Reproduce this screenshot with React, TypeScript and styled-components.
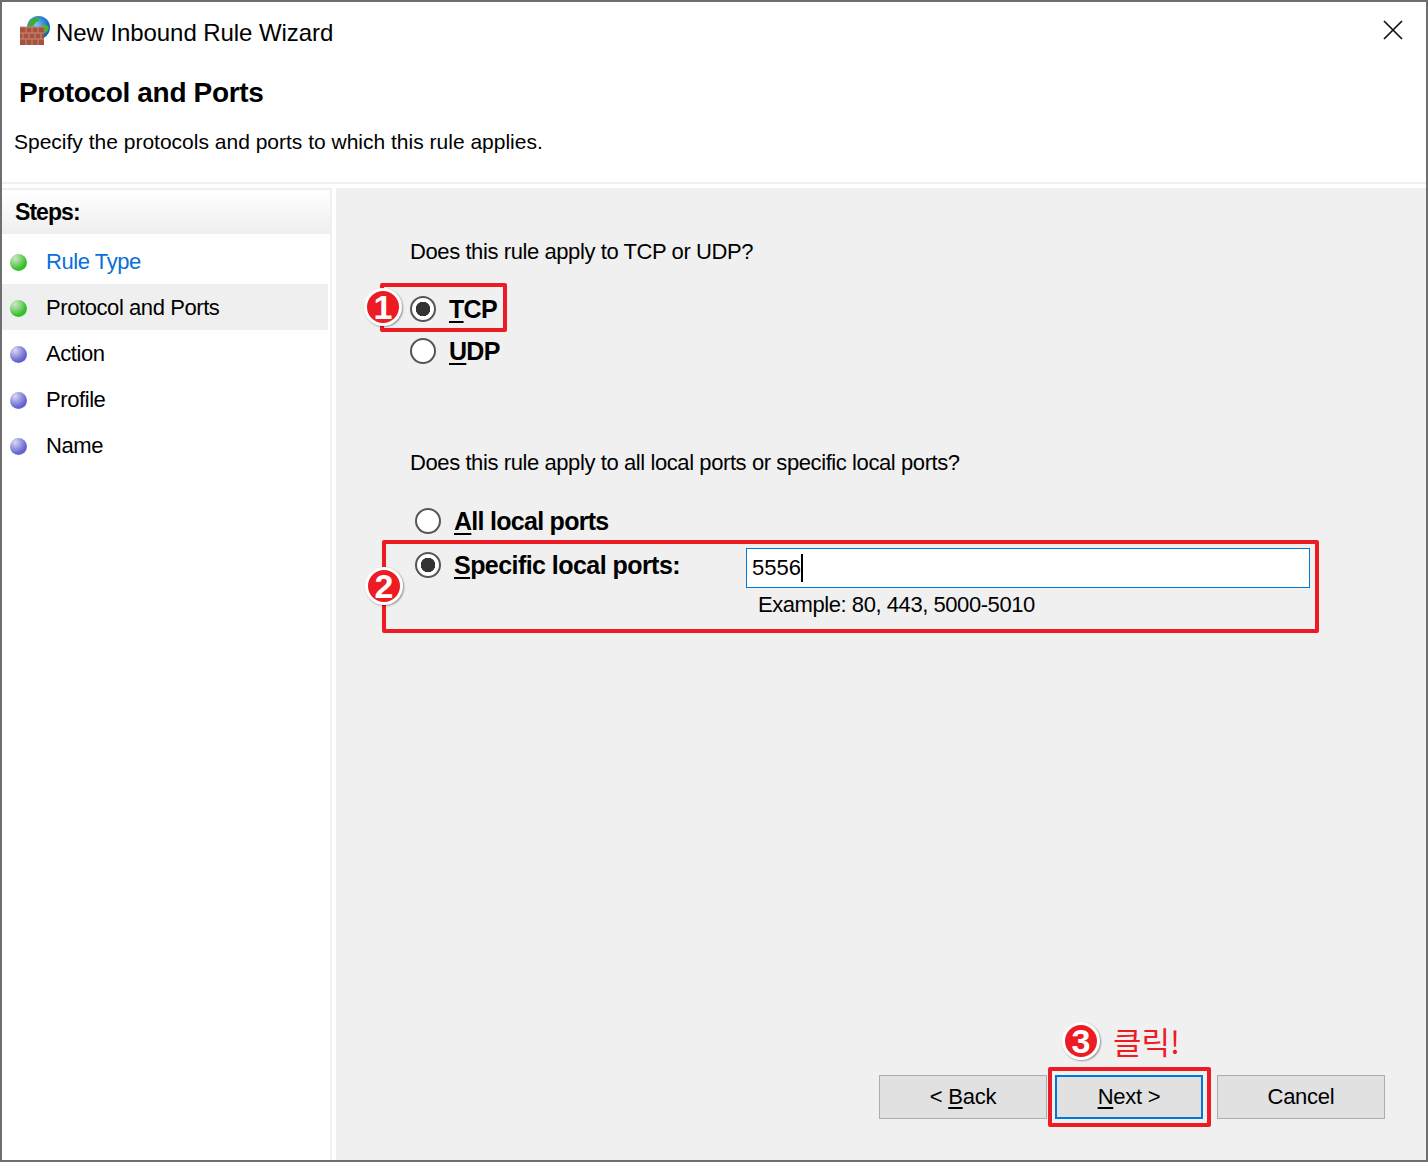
import React from "react";
import styled, { createGlobalStyle } from "styled-components";

const Global = createGlobalStyle`
  html, body { margin: 0; padding: 0; background: #fff; }
  body { font-family: "Liberation Sans", Arial, sans-serif; color: #000; }
  * { box-sizing: border-box; }
`;

const Window = styled.div`
  position: relative;
  width: 1428px;
  height: 1162px;
  display: flex;
  flex-direction: column;
  background: #fff;
  border: 2px solid #6e6e6e;
  overflow: hidden;
`;
const TitleBar = styled.div`
  height: 60px;
  display: flex;
  align-items: center;
  padding: 0 23px 0 17px;
`;
const AppTitle = styled.div`
  margin-left: 3px;
  flex: 1;
  font-size: 24px;
  letter-spacing: -0.07px;
  padding-top: 2px;
`;
const CloseButton = styled.button`
  width: 20px;
  height: 20px;
  padding: 0;
  margin-top: -4px;
  border: 0;
  background: none;
  display: flex;
`;
const Header = styled.header`
  height: 122px;
  border-bottom: 2px solid #f0f0f0;
  padding-left: 12px;
`;
const HeaderTitle = styled.h1`
  margin: 14px 0 0 5px;
  height: 34px;
  line-height: 34px;
  font-size: 28px;
  font-weight: 700;
  letter-spacing: -0.33px;
`;
const HeaderText = styled.p`
  margin: 17px 0 0;
  line-height: 30px;
  font-size: 21px;
  letter-spacing: 0;
`;
const Body = styled.div`
  flex: 1;
  min-height: 0;
  margin-top: 4px;
  display: flex;
`;
const Sidebar = styled.nav`
  width: 330px;
  border: 2px solid #f0f0f0;
  border-width: 2px 2px 0 0;
  display: flex;
  flex-direction: column;
`;
const StepsHead = styled.div`
  height: 44px;
  line-height: 44px;
  padding-left: 13px;
  font-size: 23px;
  font-weight: 700;
  letter-spacing: -0.95px;
  background: linear-gradient(#ffffff, #eeeeee);
`;
const StepList = styled.ul`
  list-style: none;
  margin: 4px 0 0;
  padding: 0;
`;
const Step = styled.li<{ $active?: boolean; $link?: boolean }>`
  width: 326px;
  height: 46px;
  display: flex;
  align-items: center;
  padding: 2px 0 0 8px;
  gap: 19px;
  font-size: 22px;
  letter-spacing: -0.42px;
  background: ${(p) => (p.$active ? "#efefef" : "transparent")};
  color: ${(p) => (p.$link ? "#0a6fd8" : "#000")};
`;
const Bullet = styled.span<{ $done?: boolean }>`
  flex: none;
  width: 17px;
  height: 17px;
  border-radius: 50%;
  background: ${(p) =>
    p.$done
      ? "radial-gradient(circle at 30% 25%, #c9e8c4 0, #8fd585 30%, #35bf2c 65%)"
      : "radial-gradient(circle at 30% 25%, #d9d9f2 0, #a2a2e2 30%, #6464d0 65%)"};
`;
const Main = styled.main`
  flex: 1;
  margin-left: 4px;
  padding: 0 0 0 74px;
  background: #f0f0f0;
  display: flex;
  flex-direction: column;
`;
const Question = styled.div<{ $top: number }>`
  margin-top: ${(p) => p.$top}px;
  height: 30px;
  line-height: 30px;
  font-size: 22px;
  letter-spacing: -0.41px;
`;
const RadioRow = styled.label<{ $top: number; $indent?: number }>`
  margin: ${(p) => p.$top}px 0 0 ${(p) => p.$indent ?? 0}px;
  height: 30px;
  display: flex;
  align-items: center;
  gap: 13px;
  font-size: 25px;
  font-weight: 700;
  letter-spacing: -0.72px;
`;
const RadioCircle = styled.span<{ $on?: boolean }>`
  flex: none;
  width: 26px;
  height: 26px;
  border-radius: 50%;
  border: 2.5px solid #555;
  background: ${(p) =>
    p.$on
      ? "radial-gradient(circle, #333 0 7px, #fff 7.5px)"
      : "#fff"};
`;
const Key = styled.span`
  text-decoration: underline;
  text-underline-offset: 3px;
  text-decoration-thickness: 2px;
`;
const PortsRow = styled.div`
  margin-top: 12px;
  display: flex;
  align-items: flex-start;
`;
const PortsLabel = styled(RadioRow)`
  width: 331px;
  flex: none;
  letter-spacing: -0.55px;
`;
const PortsField = styled.div`
  width: 564px;
`;
const PortsInput = styled.div`
  height: 40px;
  border: 1.5px solid #0078d7;
  background: #fff;
  display: flex;
  align-items: center;
  padding-left: 5px;
  font-size: 22px;
  letter-spacing: 0;
`;
const Caret = styled.span`
  width: 2px;
  height: 28px;
  background: #000;
`;
const Example = styled.div`
  margin: 2px 0 0 12px;
  height: 30px;
  line-height: 30px;
  font-size: 22px;
  letter-spacing: -0.44px;
`;
const Footer = styled.div`
  margin-top: auto;
  height: 85px;
  padding-right: 41px;
  display: flex;
  justify-content: flex-end;
`;
const WizardButton = styled.button<{ $w: number; $gap?: number; $focus?: boolean }>`
  width: ${(p) => p.$w}px;
  height: 44px;
  margin-left: ${(p) => p.$gap ?? 0}px;
  padding: 0;
  background: #e1e1e1;
  border: ${(p) => (p.$focus ? "2px solid #0078d7" : "1.5px solid #adadad")};
  font: 22px "Liberation Sans", Arial, sans-serif;
  letter-spacing: -0.25px;
  color: #000;
`;
const RedFrame = styled.div<{ $x: number; $y: number; $w: number; $h: number }>`
  position: absolute;
  left: ${(p) => p.$x - 2}px;
  top: ${(p) => p.$y - 2}px;
  width: ${(p) => p.$w}px;
  height: ${(p) => p.$h}px;
  border: 4px solid #ed1c24;
  border-radius: 2px;
  pointer-events: none;
`;
const Badge = styled.div<{ $x: number; $y: number }>`
  position: absolute;
  left: ${(p) => p.$x - 21}px;
  top: ${(p) => p.$y - 21}px;
  width: 38px;
  height: 38px;
  border-radius: 50%;
  background: #ed1c24;
  border: 3px solid #fff;
  box-shadow: 1px 1px 2px rgba(0, 0, 0, 0.4);
  color: #fff;
  font-size: 34px;
  font-weight: 700;
  line-height: 32px;
  text-align: center;
`;
const ClickNote = styled.div`
  position: absolute;
  left: 1111px;
  top: 1019px;
  color: #ed1c24;
  font-family: "Noto Sans CJK KR", sans-serif;
  font-size: 31px;
  line-height: 40px;
`;

const FirewallIcon = () => (
  <svg width="34" height="32" viewBox="0 0 34 32">
    <defs>
      <radialGradient id="globe" cx="0.4" cy="0.4" r="0.7">
        <stop offset="0" stopColor="#7fc8f5" />
        <stop offset="0.7" stopColor="#1e73c8" />
        <stop offset="1" stopColor="#1a4f9a" />
      </radialGradient>
    </defs>
    <circle cx="19.5" cy="11.5" r="11.5" fill="url(#globe)" />
    <path d="M10 7c3-5 7-6 10-5 1 2-1 4-3 4-1 2-3 3-4 6l-4-1z" fill="#3fae2e" />
    <path d="M23 9c3-1 6 0 7 3-1 3-3 5-5 5-2-2-3-5-2-8z" fill="#4cb535" />
    <rect x="1" y="11" width="24" height="18" fill="#a5533f" />
    <g stroke="#c98a74" strokeWidth="1" fill="none">
      <path d="M1 11h24M1 17h24M1 23h24" />
      <path d="M7 11v6M13 11v6M19 11v6M4 17v6M10 17v6M16 17v6M22 17v6M7 23v6M13 23v6M19 23v6" />
    </g>
  </svg>
);

const CloseIcon = () => (
  <svg width="20" height="20" viewBox="0 0 20 20">
    <path d="M1 1l18 18M19 1L1 19" stroke="#111" strokeWidth="1.7" fill="none" />
  </svg>
);

export default function App() {
  return (
    <>
      <Global />
      <Window>
        <TitleBar>
          <FirewallIcon />
          <AppTitle>New Inbound Rule Wizard</AppTitle>
          <CloseButton aria-label="Close">
            <CloseIcon />
          </CloseButton>
        </TitleBar>
        <Header>
          <HeaderTitle>Protocol and Ports</HeaderTitle>
          <HeaderText>Specify the protocols and ports to which this rule applies.</HeaderText>
        </Header>
        <Body>
          <Sidebar>
            <StepsHead>Steps:</StepsHead>
            <StepList>
              <Step $link>
                <Bullet $done />
                Rule Type
              </Step>
              <Step $active>
                <Bullet $done />
                Protocol and Ports
              </Step>
              <Step>
                <Bullet />
                Action
              </Step>
              <Step>
                <Bullet />
                Profile
              </Step>
              <Step>
                <Bullet />
                Name
              </Step>
            </StepList>
          </Sidebar>
          <Main>
            <Question $top={49}>Does this rule apply to TCP or UDP?</Question>
            <RadioRow $top={27}>
              <RadioCircle $on />
              <span>
                <Key>T</Key>CP
              </span>
            </RadioRow>
            <RadioRow $top={12}>
              <RadioCircle />
              <span>
                <Key>U</Key>DP
              </span>
            </RadioRow>
            <Question $top={82}>Does this rule apply to all local ports or specific local ports?</Question>
            <RadioRow $top={28} $indent={5}>
              <RadioCircle />
              <span>
                <Key>A</Key>ll local ports
              </span>
            </RadioRow>
            <PortsRow>
              <PortsLabel $top={2} $indent={5}>
                <RadioCircle $on />
                <span>
                  <Key>S</Key>pecific local ports:
                </span>
              </PortsLabel>
              <PortsField>
                <PortsInput>
                  5556
                  <Caret />
                </PortsInput>
                <Example>Example: 80, 443, 5000-5010</Example>
              </PortsField>
            </PortsRow>
            <Footer>
              <WizardButton $w={168}>
                &lt; <Key>B</Key>ack
              </WizardButton>
              <WizardButton $w={148} $gap={8} $focus>
                <Key>N</Key>ext &gt;
              </WizardButton>
              <WizardButton $w={168} $gap={14}>
                Cancel
              </WizardButton>
            </Footer>
          </Main>
        </Body>
        <RedFrame $x={380} $y={283} $w={127} $h={49} />
        <RedFrame $x={382} $y={540} $w={937} $h={93} />
        <RedFrame $x={1048} $y={1067} $w={163} $h={60} />
        <Badge $x={383} $y={307}>1</Badge>
        <Badge $x={384} $y={586}>2</Badge>
        <Badge $x={1081} $y={1041}>3</Badge>
        <ClickNote>클릭!</ClickNote>
      </Window>
    </>
  );
}
